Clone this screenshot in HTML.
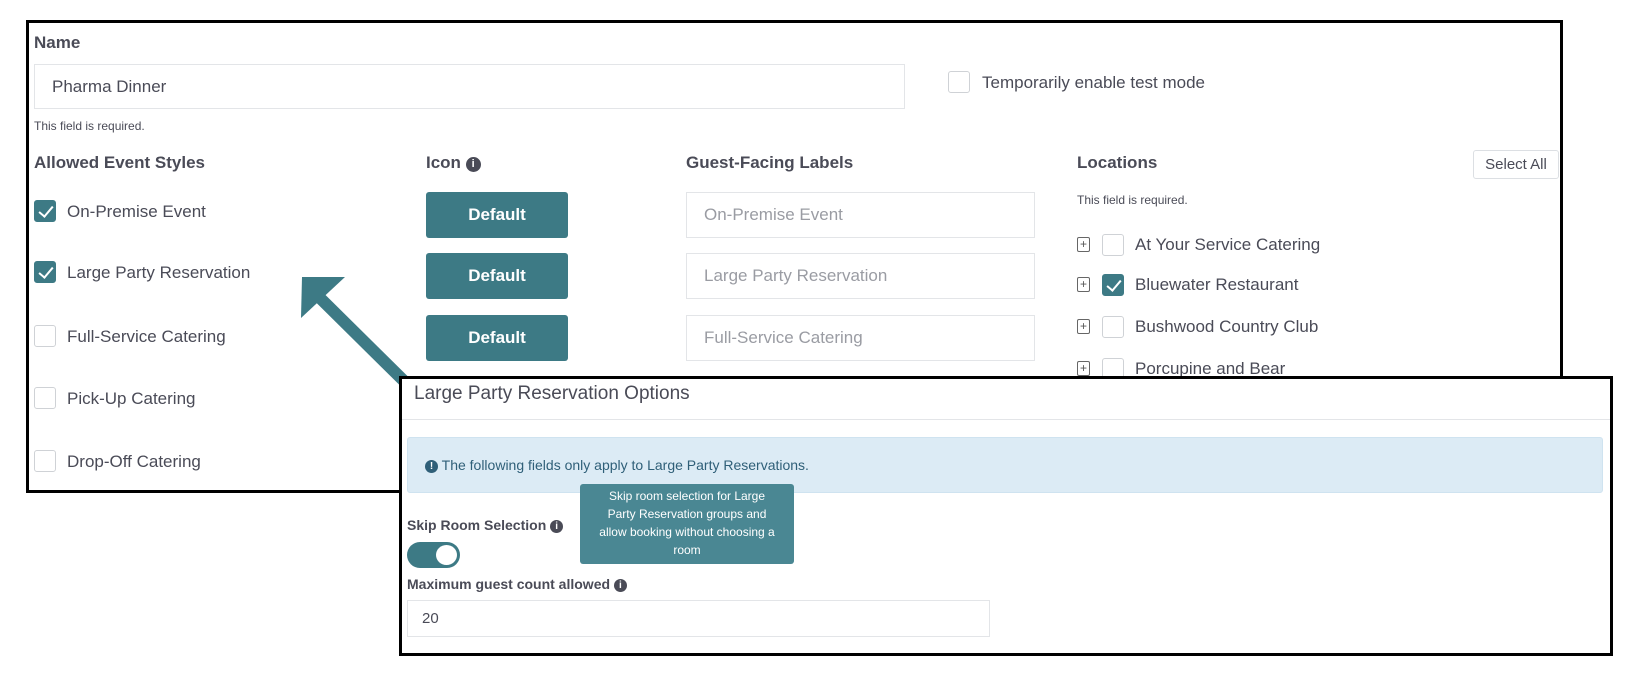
<!DOCTYPE html>
<html><head><style>
*{box-sizing:border-box;margin:0;padding:0}
body{width:1648px;height:680px;background:#fff;position:relative;overflow:hidden;font-family:"Liberation Sans",sans-serif;color:#4a4b57}
.a{position:absolute;white-space:nowrap}
.h{font-size:17px;font-weight:bold;color:#4a4b57}
.lbl{font-size:17px;color:#4a4b57}
.cb{position:absolute;width:22px;height:22px;border:1px solid #cfd2d6;border-radius:3px;background:#fff}
.cb.on{background:#3d7a85;border-color:#3d7a85}
.cb.on:after{content:"";position:absolute;left:7px;top:2px;width:6px;height:12px;border:solid #fff;border-width:0 2px 2px 0;transform:rotate(40deg)}
.btn{position:absolute;left:426px;width:142px;height:46px;background:#3d7a85;border-radius:3px;color:#fff;font-size:17px;font-weight:bold;text-align:center;line-height:46px}
.inp{position:absolute;border:1px solid #e3e5e8;background:#fff;font-size:17px;color:#9a9ca3;padding-left:17px}
.plus{position:absolute;left:1077px;width:13px;height:15px;border:1px solid #666;border-radius:2px;font-size:12px;line-height:12px;text-align:center;color:#555}
.info{display:inline-block;width:15px;height:15px;border-radius:50%;background:#4a4b57;color:#fff;font-size:11px;font-weight:bold;text-align:center;line-height:15px;vertical-align:1px}
</style></head><body>
<div class="a" style="left:26px;top:20px;width:1537px;height:473px;border:3px solid #000"></div>
<div class="a h" style="left:34px;top:33px">Name</div>
<div class="inp" style="left:34px;top:64px;width:871px;height:45px;line-height:43px;color:#4a4b57">Pharma Dinner</div>
<div class="a" style="left:34px;top:119px;font-size:12px">This field is required.</div>
<div class="cb" style="left:948px;top:71px"></div>
<div class="a lbl" style="left:982px;top:73px">Temporarily enable test mode</div>

<div class="a h" style="left:34px;top:153px">Allowed Event Styles</div>
<div class="a h" style="left:426px;top:153px">Icon <span class="info">i</span></div>
<div class="a h" style="left:686px;top:153px">Guest-Facing Labels</div>
<div class="a h" style="left:1077px;top:153px">Locations</div>
<div class="a" style="left:1473px;top:150px;width:86px;height:29px;border:1px solid #dcdfe3;border-radius:3px;font-size:15px;line-height:27px;text-align:center">Select All</div>
<div class="a" style="left:1077px;top:193px;font-size:12px">This field is required.</div>

<div class="cb on" style="left:34px;top:200px"></div><div class="a lbl" style="left:67px;top:202px">On-Premise Event</div>
<div class="cb on" style="left:34px;top:261px"></div><div class="a lbl" style="left:67px;top:263px">Large Party Reservation</div>
<div class="cb" style="left:34px;top:325px"></div><div class="a lbl" style="left:67px;top:327px">Full-Service Catering</div>
<div class="cb" style="left:34px;top:387px"></div><div class="a lbl" style="left:67px;top:389px">Pick-Up Catering</div>
<div class="cb" style="left:34px;top:450px"></div><div class="a lbl" style="left:67px;top:452px">Drop-Off Catering</div>

<div class="btn" style="top:192px">Default</div>
<div class="btn" style="top:253px">Default</div>
<div class="btn" style="top:315px">Default</div>
<div class="inp" style="left:686px;top:192px;width:349px;height:46px;line-height:44px">On-Premise Event</div>
<div class="inp" style="left:686px;top:253px;width:349px;height:46px;line-height:44px">Large Party Reservation</div>
<div class="inp" style="left:686px;top:315px;width:349px;height:46px;line-height:44px">Full-Service Catering</div>

<div class="plus" style="top:237px">+</div><div class="cb" style="left:1102px;top:234px"></div><div class="a lbl" style="left:1135px;top:235px">At Your Service Catering</div>
<div class="plus" style="top:277px">+</div><div class="cb on" style="left:1102px;top:274px"></div><div class="a lbl" style="left:1135px;top:275px">Bluewater Restaurant</div>
<div class="plus" style="top:319px">+</div><div class="cb" style="left:1102px;top:316px"></div><div class="a lbl" style="left:1135px;top:317px">Bushwood Country Club</div>
<div class="plus" style="top:361px">+</div><div class="cb" style="left:1102px;top:358px"></div><div class="a lbl" style="left:1135px;top:359px">Porcupine and Bear</div>

<svg class="a" style="left:0;top:0" width="1648" height="680"><line x1="405" y1="382" x2="318" y2="296" stroke="#3d7a85" stroke-width="12"/><polygon points="302,277 345,277 301,318" fill="#3d7a85"/></svg>

<div class="a" style="left:399px;top:376px;width:1214px;height:280px;border:3px solid #000;background:#fff"></div>
<div class="a" style="left:414px;top:383px;font-size:19px;color:#4a4b57">Large Party Reservation Options</div>
<div class="a" style="left:402px;top:419px;width:1208px;height:1px;background:#e3e5e8"></div>
<div class="a" style="left:407px;top:437px;width:1196px;height:56px;background:#dcebf5;border:1px solid #cfe3f0;border-radius:3px"></div>
<div class="a" style="left:425px;top:457px;font-size:14px;color:#2f5f78"><span class="info" style="background:#2f5f78;width:13px;height:13px;line-height:13px;font-size:10px">!</span> The following fields only apply to Large Party Reservations.</div>
<div class="a" style="left:407px;top:517px;font-size:14px;font-weight:bold;color:#4a4b57">Skip Room Selection <span class="info" style="width:13px;height:13px;line-height:13px;font-size:10px">i</span></div>
<div class="a" style="left:576px;top:520px;width:0;height:0;border:5px solid transparent;border-right-color:#4a8793"></div>
<div class="a" style="left:580px;top:484px;width:214px;height:80px;background:#4a8793;border-radius:3px;color:#fff;font-size:12px;line-height:18px;text-align:center;white-space:normal;padding:3px 18px">Skip room selection for Large Party Reservation groups and allow booking without choosing a room</div>
<div class="a" style="left:407px;top:542px;width:53px;height:26px;background:#3d7a85;border-radius:13px"></div>
<div class="a" style="left:436px;top:545px;width:21px;height:20px;background:#fff;border-radius:50%"></div>
<div class="a" style="left:407px;top:576px;font-size:14px;font-weight:bold;color:#4a4b57">Maximum guest count allowed <span class="info" style="width:13px;height:13px;line-height:13px;font-size:10px">i</span></div>
<div class="inp" style="left:407px;top:600px;width:583px;height:37px;line-height:35px;font-size:15px;color:#4a4b57;padding-left:14px">20</div>
</body></html>
